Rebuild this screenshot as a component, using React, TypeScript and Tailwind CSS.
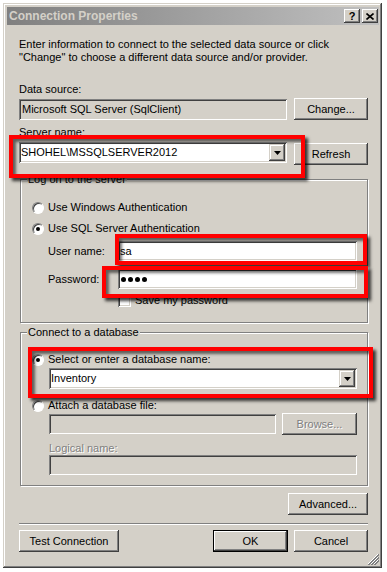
import React from "react";

const raised =
  "bg-[#d4d0c8] shadow-[inset_-1px_-1px_#404040,inset_1px_1px_#ffffff,inset_-2px_-2px_#808080]";
const sunken =
  "shadow-[inset_1px_1px_#808080,inset_-1px_-1px_#ffffff,inset_2px_2px_#404040,inset_-2px_-2px_#d4d0c8]";
const disabledText = "text-[#808080] [text-shadow:1px_1px_0_#ffffff]";
const redBox =
  "absolute border-[4px] border-[#ff0000] shadow-[3px_3px_3px_rgba(0,0,0,0.75),inset_3px_3px_3px_rgba(0,0,0,0.55)]";

function Btn({
  children,
  w,
  disabled,
  def,
}: {
  children: React.ReactNode;
  w: string;
  disabled?: boolean;
  def?: boolean;
}) {
  if (def) {
    return (
      <div className={`${w} h-[22px] border border-black`}>
        <div className={`${raised} w-full h-full flex items-center justify-center`}>{children}</div>
      </div>
    );
  }
  return (
    <div
      className={`${raised} ${w} h-[22px] flex items-center justify-center ${disabled ? disabledText : ""}`}
    >
      {children}
    </div>
  );
}

function DropBtn() {
  return (
    <div
      className={`w-[16px] h-[17px] mt-[2px] mr-[2px] flex items-center justify-center bg-[#d4d0c8] shadow-[inset_-1px_-1px_#404040,inset_1px_1px_#d4d0c8,inset_-2px_-2px_#808080,inset_2px_2px_#ffffff]`}
    >
      <svg width="7" height="4" viewBox="0 0 7 4">
        <path d="M0 0H7L3.5 4Z" fill="#000" />
      </svg>
    </div>
  );
}

function Radio({ checked }: { checked?: boolean }) {
  return (
    <div className="w-[12px] h-[12px] rounded-full bg-white border border-t-[#808080] border-l-[#808080] border-b-white border-r-white shadow-[inset_1px_1px_#404040] flex items-center justify-center shrink-0">
      {checked && <div className="w-[4px] h-[4px] rounded-full bg-black" />}
    </div>
  );
}

export default function App() {
  return (
    <div className="relative w-[387px] h-[572px] bg-white pt-[3px] pl-[3px] font-['Liberation_Sans',Arial,sans-serif] text-[11px] leading-[13px] text-black overflow-hidden">
      <div className="relative w-[379px] h-[565px] bg-[#d4d0c8] pt-[4px] pl-[4px] pr-[3px] flex flex-col shadow-[inset_-1px_-1px_#404040,inset_1px_1px_#d4d0c8,inset_-2px_-2px_#808080,inset_2px_2px_#ffffff]">
        {/* Title bar */}
        <div className="h-[18px] flex items-center justify-between bg-[linear-gradient(to_right,#808080,#c0c0c0)] pr-[1px]">
          <span className="pl-[2px] font-bold text-[12px] text-[#d4d0c8] whitespace-nowrap">Connection Properties</span>
          <div className="flex gap-[2px]">
            <div className={`${raised} w-[16px] h-[14px] flex items-center justify-center text-[11px] font-bold leading-none pt-[1px]`}>
              ?
            </div>
            <div className={`${raised} w-[16px] h-[14px] flex items-center justify-center`}>
              <svg width="8" height="7" viewBox="0 0 8 7">
                <path d="M0.5 0.5L7.5 6.5M7.5 0.5L0.5 6.5" stroke="#000" strokeWidth="1.6" />
              </svg>
            </div>
          </div>
        </div>

        {/* Content */}
        <div className="ml-[12px] w-[349px] flex flex-col">
          <div className="mt-[13px] whitespace-nowrap">
            Enter information to connect to the selected data source or click
            <br />
            "Change" to choose a different data source and/or provider.
          </div>

          <div className="mt-[19px]">Data source:</div>
          <div className="mt-[2px] flex h-[22px]">
            <div className={`${sunken} w-[268px] h-[21px] mt-[1px] bg-[#d4d0c8] pl-[3px] flex items-center`}>
              Microsoft SQL Server (SqlClient)
            </div>
            <div className="ml-[7px]">
              <Btn w="w-[74px]">Change...</Btn>
            </div>
          </div>

          <div className="mt-[6px]">Server name:</div>
          <div className="mt-[3px] flex h-[23px]">
            <div className={`${sunken} w-[268px] h-[21px] bg-white flex`}>
              <div className="flex-1 pl-[2px] flex items-center whitespace-nowrap">SHOHEL\MSSQLSERVER2012</div>
              <DropBtn />
            </div>
            <div className="ml-[7px] mt-[1px]">
              <Btn w="w-[74px]">Refresh</Btn>
            </div>
          </div>

          {/* Log on group */}
          <div className="relative mt-[14px] ml-[1px] w-[348px] h-[144px] border border-[#808080] shadow-[inset_1px_1px_#ffffff,1px_1px_#ffffff] flex flex-col">
            <div className="absolute -top-[7px] left-[6px] px-[1px] bg-[#d4d0c8] whitespace-nowrap">
              Log on to the server
            </div>
            <div className="pt-[21px] pl-[11px] flex items-center gap-[4px]">
              <Radio />
              <span>Use Windows Authentication</span>
            </div>
            <div className="mt-[8px] pl-[11px] flex items-center gap-[4px]">
              <Radio checked />
              <span>Use SQL Server Authentication</span>
            </div>
            <div className="mt-[6px] pl-[27px] flex items-center h-[20px]">
              <span className="w-[70px]">User name:</span>
              <div className={`${sunken} w-[239px] h-[20px] bg-white pl-[2px] flex items-center`}>sa</div>
            </div>
            <div className="mt-[8px] pl-[27px] flex items-center h-[20px]">
              <span className="w-[70px]">Password:</span>
              <div className={`${sunken} w-[239px] h-[20px] bg-white pl-[3px] flex items-center gap-[2px]`}>
                <span className="w-[5px] h-[5px] rounded-full bg-black" />
                <span className="w-[5px] h-[5px] rounded-full bg-black" />
                <span className="w-[5px] h-[5px] rounded-full bg-black" />
                <span className="w-[5px] h-[5px] rounded-full bg-black" />
              </div>
            </div>
            <div className="mt-[5px] pl-[97px] flex items-center gap-[4px]">
              <div className={`${sunken} w-[13px] h-[13px] bg-white`} />
              <span>Save my password</span>
            </div>
          </div>

          {/* Connect group */}
          <div className="relative mt-[9px] ml-[1px] w-[348px] h-[154px] border border-[#808080] shadow-[inset_1px_1px_#ffffff,1px_1px_#ffffff] flex flex-col">
            <div className="absolute -top-[7px] left-[6px] px-[1px] bg-[#d4d0c8] whitespace-nowrap">
              Connect to a database
            </div>
            <div className="pt-[20px] pl-[11px] flex items-center gap-[4px]">
              <Radio checked />
              <span>Select or enter a database name:</span>
            </div>
            <div className={`${sunken} mt-[2px] ml-[28px] w-[308px] h-[21px] bg-white flex`}>
              <div className="flex-1 pl-[2px] flex items-center">Inventory</div>
              <DropBtn />
            </div>
            <div className="mt-[10px] pl-[11px] flex items-center gap-[4px]">
              <Radio />
              <span>Attach a database file:</span>
            </div>
            <div className="mt-[1px] ml-[28px] flex h-[22px]">
              <div className={`${sunken} w-[227px] h-[20px] mt-[1px] bg-[#d4d0c8]`} />
              <div className="ml-[6px]">
                <Btn w="w-[75px]" disabled>
                  Browse...
                </Btn>
              </div>
            </div>
            <div className={`mt-[7px] ml-[28px] ${disabledText}`}>Logical name:</div>
            <div className={`${sunken} ml-[28px] w-[308px] h-[20px] bg-[#d4d0c8]`} />
          </div>

          <div className="mt-[7px] self-end">
            <Btn w="w-[80px]">Advanced...</Btn>
          </div>

          <div className="mt-[8px] h-[2px] border-t border-t-[#808080] border-b border-b-white" />

          <div className="mt-[5px] flex">
            <Btn w="w-[100px]">Test Connection</Btn>
            <div className="ml-auto flex gap-[6px]">
              <Btn w="w-[75px]" def>
                OK
              </Btn>
              <Btn w="w-[74px]">Cancel</Btn>
            </div>
          </div>
        </div>

        {/* Size grip */}
        <svg className="absolute right-[3px] bottom-[3px]" width="12" height="12" viewBox="0 0 12 12">
          <path d="M11 1L1 11M11 4L4 11M11 7L7 11" stroke="#ffffff" strokeWidth="1" />
          <path d="M12 1L1 12M12 2L2 12M12 4L4 12M12 5L5 12M12 7L7 12M12 8L8 12" stroke="#808080" strokeWidth="1" />
        </svg>
      </div>

      {/* Red annotation boxes */}
      <div className={`${redBox} left-[9px] top-[135px] w-[296px] h-[43px]`} />
      <div className={`${redBox} left-[115px] top-[234px] w-[252px] h-[31px]`} />
      <div className={`${redBox} left-[102px] top-[266px] w-[266px] h-[32px]`} />
      <div className={`${redBox} left-[28px] top-[347px] w-[345px] h-[51px]`} />
    </div>
  );
}
